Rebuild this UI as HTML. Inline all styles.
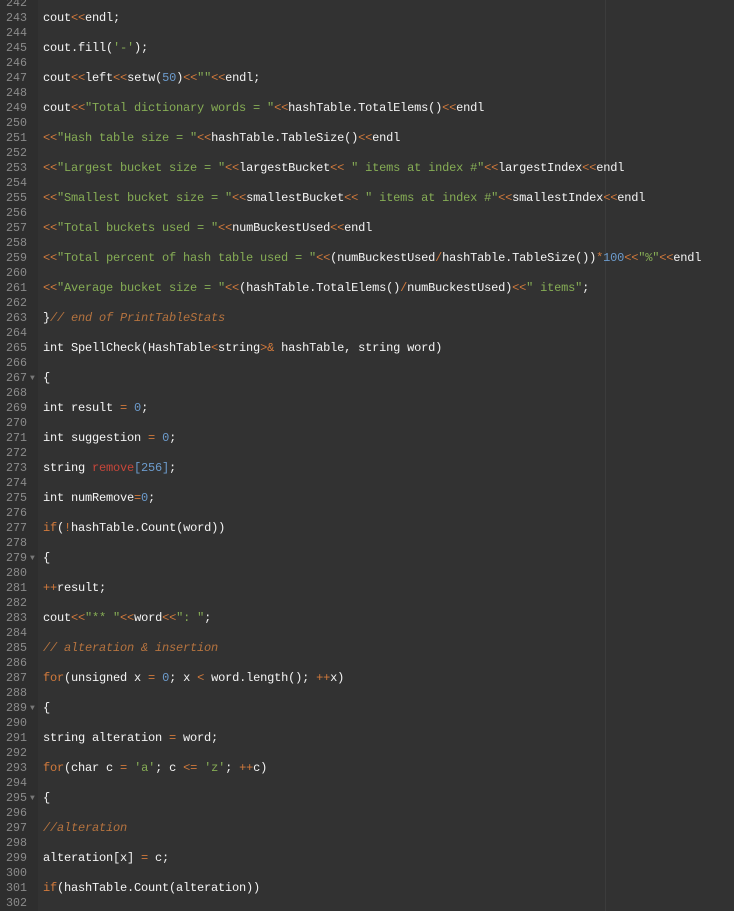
<!DOCTYPE html>
<html><head><meta charset="utf-8"><style>
html,body{margin:0;padding:0;width:734px;height:911px;overflow:hidden;background:#323232}
#g{position:absolute;left:0;top:0;width:38px;height:911px;background:#2e2e2e}
#guide{position:absolute;left:605px;top:0;width:1px;height:911px;background:#3c3c3c}
#wrap{position:absolute;left:0;top:-4px;width:734px}
.l{position:relative;height:15px;line-height:15px;font-family:"Liberation Mono",monospace;font-size:11.67px;white-space:pre}
.num{position:absolute;left:0;width:27px;text-align:right;color:#8c8c8c}
.f{position:absolute;left:30px;top:0;color:#777;font-size:8px}
.t{position:absolute;left:43px;color:#f4f4f4;font-size:12px;letter-spacing:-0.2px}
.o{color:#d27a3c}.s{color:#86ad55}.n{color:#6c9bcc}.c{color:#b5733f;font-style:italic}.r{color:#c8463a}
</style></head><body>
<div id="g"></div><div id="guide"></div>
<div id="wrap">
<div class="l"><span class="num">242</span></div>
<div class="l"><span class="num">243</span><span class="t">cout<span class="o">&lt;&lt;</span>endl;</span></div>
<div class="l"><span class="num">244</span></div>
<div class="l"><span class="num">245</span><span class="t">cout.fill(<span class="s">'-'</span>);</span></div>
<div class="l"><span class="num">246</span></div>
<div class="l"><span class="num">247</span><span class="t">cout<span class="o">&lt;&lt;</span>left<span class="o">&lt;&lt;</span>setw(<span class="n">50</span>)<span class="o">&lt;&lt;</span><span class="s">""</span><span class="o">&lt;&lt;</span>endl;</span></div>
<div class="l"><span class="num">248</span></div>
<div class="l"><span class="num">249</span><span class="t">cout<span class="o">&lt;&lt;</span><span class="s">"Total dictionary words = "</span><span class="o">&lt;&lt;</span>hashTable.TotalElems()<span class="o">&lt;&lt;</span>endl</span></div>
<div class="l"><span class="num">250</span></div>
<div class="l"><span class="num">251</span><span class="t"><span class="o">&lt;&lt;</span><span class="s">"Hash table size = "</span><span class="o">&lt;&lt;</span>hashTable.TableSize()<span class="o">&lt;&lt;</span>endl</span></div>
<div class="l"><span class="num">252</span></div>
<div class="l"><span class="num">253</span><span class="t"><span class="o">&lt;&lt;</span><span class="s">"Largest bucket size = "</span><span class="o">&lt;&lt;</span>largestBucket<span class="o">&lt;&lt;</span> <span class="s">" items at index #"</span><span class="o">&lt;&lt;</span>largestIndex<span class="o">&lt;&lt;</span>endl</span></div>
<div class="l"><span class="num">254</span></div>
<div class="l"><span class="num">255</span><span class="t"><span class="o">&lt;&lt;</span><span class="s">"Smallest bucket size = "</span><span class="o">&lt;&lt;</span>smallestBucket<span class="o">&lt;&lt;</span> <span class="s">" items at index #"</span><span class="o">&lt;&lt;</span>smallestIndex<span class="o">&lt;&lt;</span>endl</span></div>
<div class="l"><span class="num">256</span></div>
<div class="l"><span class="num">257</span><span class="t"><span class="o">&lt;&lt;</span><span class="s">"Total buckets used = "</span><span class="o">&lt;&lt;</span>numBuckestUsed<span class="o">&lt;&lt;</span>endl</span></div>
<div class="l"><span class="num">258</span></div>
<div class="l"><span class="num">259</span><span class="t"><span class="o">&lt;&lt;</span><span class="s">"Total percent of hash table used = "</span><span class="o">&lt;&lt;</span>(numBuckestUsed<span class="o">/</span>hashTable.TableSize())<span class="o">*</span><span class="n">100</span><span class="o">&lt;&lt;</span><span class="s">"%"</span><span class="o">&lt;&lt;</span>endl</span></div>
<div class="l"><span class="num">260</span></div>
<div class="l"><span class="num">261</span><span class="t"><span class="o">&lt;&lt;</span><span class="s">"Average bucket size = "</span><span class="o">&lt;&lt;</span>(hashTable.TotalElems()<span class="o">/</span>numBuckestUsed)<span class="o">&lt;&lt;</span><span class="s">" items"</span>;</span></div>
<div class="l"><span class="num">262</span></div>
<div class="l"><span class="num">263</span><span class="t">}<span class="c">// end of PrintTableStats</span></span></div>
<div class="l"><span class="num">264</span></div>
<div class="l"><span class="num">265</span><span class="t">int SpellCheck(HashTable<span class="o">&lt;</span>string<span class="o">&gt;&amp;</span> hashTable, string word)</span></div>
<div class="l"><span class="num">266</span></div>
<div class="l"><span class="num">267</span><span class="f">▼</span><span class="t">{</span></div>
<div class="l"><span class="num">268</span></div>
<div class="l"><span class="num">269</span><span class="t">int result <span class="o">=</span> <span class="n">0</span>;</span></div>
<div class="l"><span class="num">270</span></div>
<div class="l"><span class="num">271</span><span class="t">int suggestion <span class="o">=</span> <span class="n">0</span>;</span></div>
<div class="l"><span class="num">272</span></div>
<div class="l"><span class="num">273</span><span class="t">string <span class="r">remove</span><span class="n">[256]</span>;</span></div>
<div class="l"><span class="num">274</span></div>
<div class="l"><span class="num">275</span><span class="t">int numRemove<span class="o">=</span><span class="n">0</span>;</span></div>
<div class="l"><span class="num">276</span></div>
<div class="l"><span class="num">277</span><span class="t"><span class="o">if</span>(<span class="o">!</span>hashTable.Count(word))</span></div>
<div class="l"><span class="num">278</span></div>
<div class="l"><span class="num">279</span><span class="f">▼</span><span class="t">{</span></div>
<div class="l"><span class="num">280</span></div>
<div class="l"><span class="num">281</span><span class="t"><span class="o">++</span>result;</span></div>
<div class="l"><span class="num">282</span></div>
<div class="l"><span class="num">283</span><span class="t">cout<span class="o">&lt;&lt;</span><span class="s">"** "</span><span class="o">&lt;&lt;</span>word<span class="o">&lt;&lt;</span><span class="s">": "</span>;</span></div>
<div class="l"><span class="num">284</span></div>
<div class="l"><span class="num">285</span><span class="t"><span class="c">// alteration &amp; insertion</span></span></div>
<div class="l"><span class="num">286</span></div>
<div class="l"><span class="num">287</span><span class="t"><span class="o">for</span>(unsigned x <span class="o">=</span> <span class="n">0</span>; x <span class="o">&lt;</span> word.length(); <span class="o">++</span>x)</span></div>
<div class="l"><span class="num">288</span></div>
<div class="l"><span class="num">289</span><span class="f">▼</span><span class="t">{</span></div>
<div class="l"><span class="num">290</span></div>
<div class="l"><span class="num">291</span><span class="t">string alteration <span class="o">=</span> word;</span></div>
<div class="l"><span class="num">292</span></div>
<div class="l"><span class="num">293</span><span class="t"><span class="o">for</span>(char c <span class="o">=</span> <span class="s">'a'</span>; c <span class="o">&lt;=</span> <span class="s">'z'</span>; <span class="o">++</span>c)</span></div>
<div class="l"><span class="num">294</span></div>
<div class="l"><span class="num">295</span><span class="f">▼</span><span class="t">{</span></div>
<div class="l"><span class="num">296</span></div>
<div class="l"><span class="num">297</span><span class="t"><span class="c">//alteration</span></span></div>
<div class="l"><span class="num">298</span></div>
<div class="l"><span class="num">299</span><span class="t">alteration[x] <span class="o">=</span> c;</span></div>
<div class="l"><span class="num">300</span></div>
<div class="l"><span class="num">301</span><span class="t"><span class="o">if</span>(hashTable.Count(alteration))</span></div>
<div class="l"><span class="num">302</span></div>
</div>
</body></html>
